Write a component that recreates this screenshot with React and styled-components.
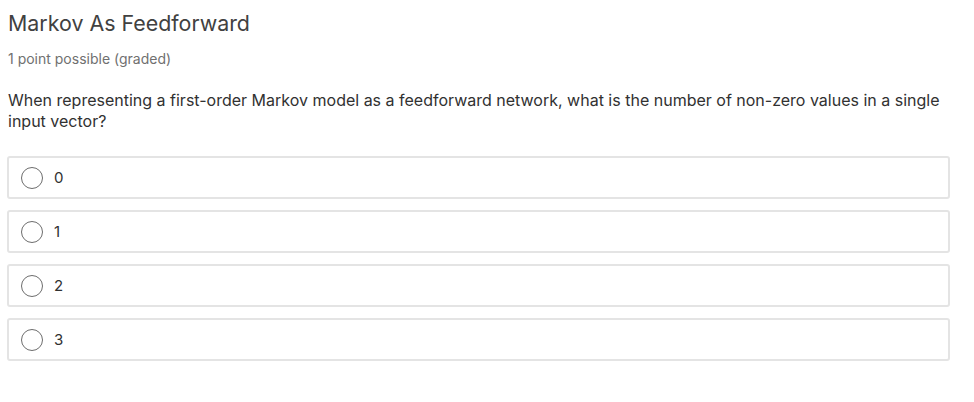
import React from "react";
import styled, { createGlobalStyle } from "styled-components";

const Global = createGlobalStyle`
  html, body { margin: 0; padding: 0; background: #fff; }
  body { font-family: Inter, "Noto Sans", sans-serif; }
`;

const Page = styled.div`
  padding: 10px 24px 0 7px;
`;

const Title = styled.h3`
  margin: 0 0 0 1px;
  font-size: 21.4px;
  line-height: 26px;
  font-weight: 400;
  color: #414141;
`;

const Meta = styled.div`
  margin: 14px 0 0 1px;
  font-size: 14px;
  line-height: 17px;
  color: #707070;
`;

const Question = styled.p`
  margin: 23px 0 0 1px;
  font-size: 16px;
  letter-spacing: 0;
  line-height: 21px;
  color: #313131;
`;

const Options = styled.div`
  margin-top: 24px;
  display: flex;
  flex-direction: column;
  gap: 11px;
`;

const Option = styled.label`
  display: flex;
  align-items: center;
  gap: 11px;
  height: 43px;
  box-sizing: border-box;
  padding: 0 12px;
  border: 2px solid #e4e4e4;
  border-radius: 3px;
  font-size: 15px;
  color: #313131;
  cursor: pointer;
`;

const Radio = styled.span`
  width: 22px;
  height: 22px;
  box-sizing: border-box;
  border: 1px solid #6d6d6d;
  border-radius: 50%;
  flex-shrink: 0;
`;

export default function App() {
  const choices = ["0", "1", "2", "3"];
  return (
    <Page>
      <Global />
      <Title>Markov As Feedforward</Title>
      <Meta>1 point possible (graded)</Meta>
      <Question>
        When representing a first-order Markov model as a feedforward network, what is the number of non-zero values in a single input vector?
      </Question>
      <Options>
        {choices.map((c) => (
          <Option key={c}>
            <Radio />
            <span>{c}</span>
          </Option>
        ))}
      </Options>
    </Page>
  );
}
